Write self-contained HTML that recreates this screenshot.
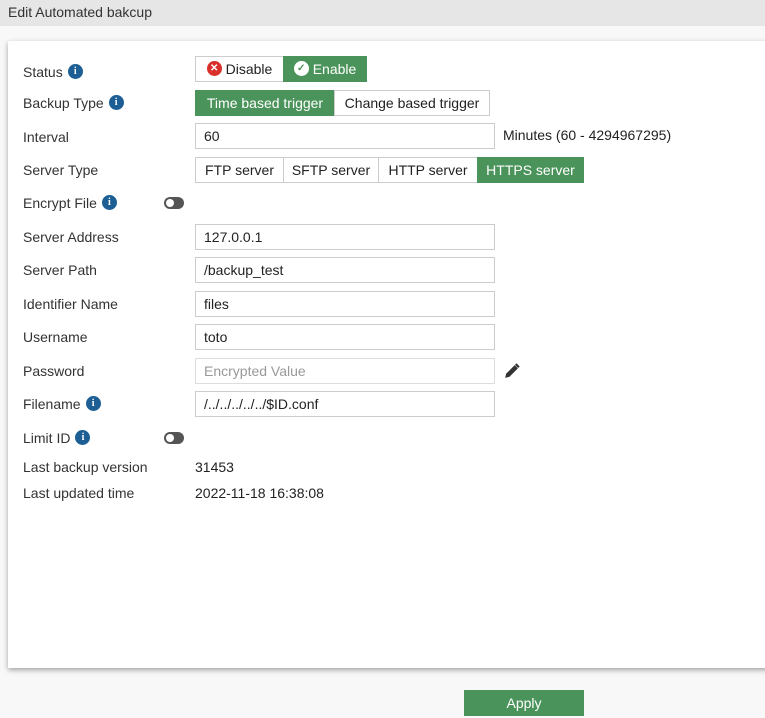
<!DOCTYPE html>
<html><head><style>
*{box-sizing:border-box;margin:0;padding:0}
body{width:765px;height:718px;background:#f8f8f8;font-family:"Liberation Sans",sans-serif;font-size:14px;color:#222;position:relative;overflow:hidden}
.hdr{position:absolute;left:0;top:0;width:765px;height:26px;background:#e6e6e6;padding:4px 8px;font-size:14px;color:#333}
.panel{position:absolute;left:8px;top:41px;width:770px;height:627px;background:#fff;box-shadow:0 2px 5px rgba(0,0,0,.35)}
.l{position:absolute;left:23px;line-height:16px;color:#333}
.i{display:inline-block;width:15px;height:15px;border-radius:50%;background:#1d5f94;color:#fff;font:bold 10px/15px "Liberation Serif",serif;text-align:center;vertical-align:top;margin-top:0;margin-left:5px}
.box{position:absolute;border:1px solid #ccc;height:26px;line-height:24px;padding-left:8px;background:#fff;color:#222}
.btn{position:absolute;border:1px solid #ccc;height:26px;line-height:24px;text-align:center;background:#fff;color:#222}
.g{background:#4a935a;border-color:#4a935a;color:#fff}
.ic{display:inline-block;width:15px;height:15px;border-radius:50%;font:bold 10px/15px sans-serif;vertical-align:top;margin-top:4px;margin-right:4px;text-align:center}
.tog{position:absolute;left:164px;width:20px;height:12px;border-radius:6px;background:#555}
.tog:after{content:"";position:absolute;left:2px;top:2px;width:8px;height:8px;border-radius:50%;background:#fff}
.v{position:absolute;left:195px;line-height:16px}
</style></head><body>
<div class="hdr">Edit Automated bakcup</div>
<div class="panel"></div>
<div class="l" style="top:64px">Status<span class="i">i</span></div>
<div class="btn" style="left:195px;top:56px;width:89px"><span class="ic" style="background:#d9302b;color:#fff">✕</span>Disable</div>
<div class="btn g" style="left:283px;top:56px;width:84px"><span class="ic" style="background:#fff;color:#4a935a">✓</span>Enable</div>
<div class="l" style="top:95px">Backup Type<span class="i">i</span></div>
<div class="btn g" style="left:195px;top:90px;width:140px">Time based trigger</div>
<div class="btn" style="left:334px;top:90px;width:156px">Change based trigger</div>
<div class="l" style="top:129px">Interval</div>
<div class="box" style="left:195px;top:123px;width:300px">60</div>
<div class="v" style="left:503px;top:127px">Minutes (60 - 4294967295)</div>
<div class="l" style="top:162px">Server Type</div>
<div class="btn" style="left:195px;top:157px;width:89px">FTP server</div>
<div class="btn" style="left:283px;top:157px;width:96px">SFTP server</div>
<div class="btn" style="left:378px;top:157px;width:100px">HTTP server</div>
<div class="btn g" style="left:477px;top:157px;width:107px">HTTPS server</div>
<div class="l" style="top:195px">Encrypt File<span class="i">i</span></div>
<div class="tog" style="top:197px"></div>
<div class="l" style="top:229px">Server Address</div>
<div class="box" style="left:195px;top:224px;width:300px">127.0.0.1</div>
<div class="l" style="top:262px">Server Path</div>
<div class="box" style="left:195px;top:257px;width:300px">/backup_test</div>
<div class="l" style="top:296px">Identifier Name</div>
<div class="box" style="left:195px;top:291px;width:300px">files</div>
<div class="l" style="top:329px">Username</div>
<div class="box" style="left:195px;top:324px;width:300px">toto</div>
<div class="l" style="top:363px">Password</div>
<div class="box" style="left:195px;top:358px;width:300px;color:#999;border-color:#ddd">Encrypted Value</div>
<svg style="position:absolute;left:503px;top:363px" width="17" height="17" viewBox="0 0 16 16"><path d="M2 14l1-4 8-8 3 3-8 8z" fill="#333"/><path d="M12 1l3 3" stroke="#333" stroke-width="2"/></svg>
<div class="l" style="top:396px">Filename<span class="i">i</span></div>
<div class="box" style="left:195px;top:391px;width:300px">/../../../../../$ID.conf</div>
<div class="l" style="top:430px">Limit ID<span class="i">i</span></div>
<div class="tog" style="top:432px"></div>
<div class="l" style="top:459px">Last backup version</div>
<div class="v" style="top:459px">31453</div>
<div class="l" style="top:485px">Last updated time</div>
<div class="v" style="top:485px">2022-11-18 16:38:08</div>
<div class="btn g" style="left:464px;top:690px;width:120px;height:26px">Apply</div>
</body></html>
